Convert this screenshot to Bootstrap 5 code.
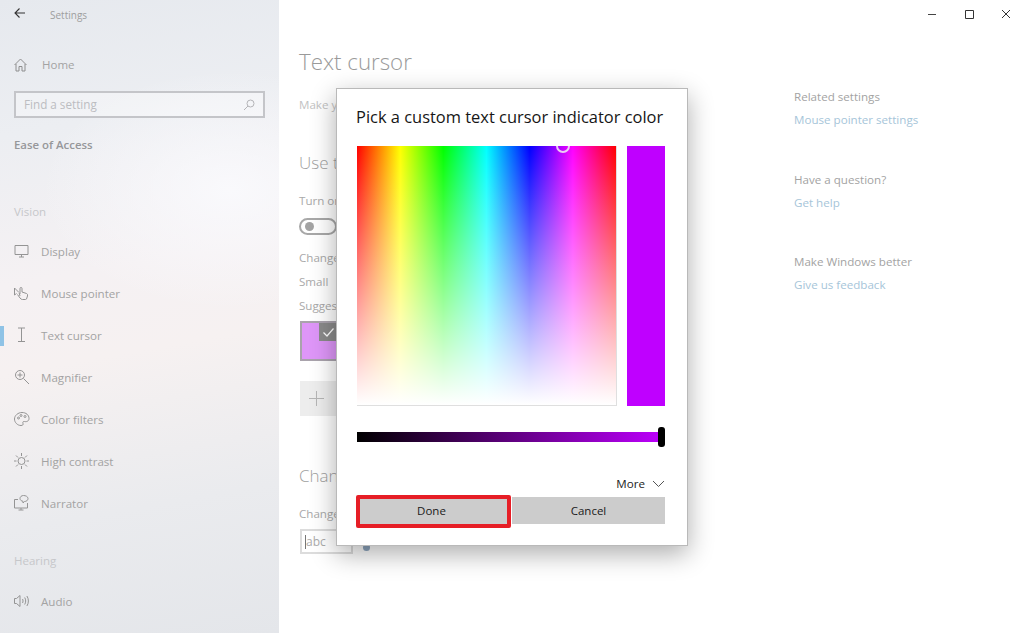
<!DOCTYPE html>
<html lang="en">
<head>
<meta charset="utf-8">
<title>Settings</title>
<link href="https://cdn.jsdelivr.net/npm/bootstrap@5.3.0/dist/css/bootstrap.min.css" rel="stylesheet">
<style>
html,body{height:100%;overflow:hidden;background:#fff}
body{font-family:"Open Sans","Noto Sans",sans-serif;font-size:12px;color:#9b9b9b;position:relative}
.shell{height:633px}
.side{width:279px;height:633px;flex:none;overflow:hidden;padding-left:14px;
 background:radial-gradient(ellipse 190px 120px at 230px 190px,rgba(250,250,253,.9),rgba(250,250,253,0)),linear-gradient(170deg,#e6e9ee 0%,#eceef2 20%,#f5f1f3 42%,#f6f1f1 55%,#eaebee 78%,#e4e6ea 100%)}
.titlebar{height:31px;color:#9e9e9e;font-size:10px}
.backic{width:12px;height:12px;margin-right:24px;margin-top:-6px;color:#333}
.homerow{height:46px;margin-top:10px;margin-bottom:4px;font-size:11.5px;color:#a3a3a3;padding-top:1px}
.homerow svg{margin-right:15px}
.findbox{width:251px;height:27px;border:2px solid #c4c5c9;padding:0 8px;font-size:11.7px;color:#bcbdc1;background:rgba(255,255,255,.3)}
.cat{font-weight:600;color:#96979a;font-size:11.4px;margin-top:18px;height:18px;line-height:18px}
.groupname{color:#c6c7ca;font-size:11.5px;height:18px;line-height:18px}
.g1{margin-top:49px;margin-bottom:10px}
.g2{margin-top:27px;margin-bottom:11px}
.navrow{height:42px;color:#a3a3a3;font-size:11.6px;position:relative}
.navrow svg{width:16px;height:16px;margin-right:11px;color:#949494;flex:none;margin-top:-3px}
.activebar{position:absolute;left:-14px;top:11px;width:4px;height:20px;background:#8fc3e6}
.mainpane{padding:0 0 0 20px;width:495px;flex:none}
.ptitle{font-size:22.3px;font-weight:300;color:#9a9a9a;line-height:32px;margin-top:46px}
.psub{font-size:11.6px;color:#c2c2c2;margin-top:19px;line-height:16px}
.sect{font-size:17px;font-weight:300;color:#9f9f9f;line-height:24px}
.lbl{font-size:11.6px;color:#a9a9a9;line-height:16px}
.secta{margin-top:38px}
.sectb{margin-top:48px}
.lbl1{margin-top:18px}
.lbl2{margin-top:15px}
.lbl3{margin-top:8px}
.tog{width:38px;height:17px;border:2px solid #a8a8a8;border-radius:9px;margin-top:9px;padding-left:4px}
.knob{width:9px;height:9px;border-radius:50%;background:#a3a3a3}
.swatchrow{width:60px;height:40px;background:#de96f8;border:2px solid #a9a3ac;margin-top:7px;position:relative;margin-left:1px}
.swcheck{position:absolute;left:17px;top:0;width:19px;height:18px;background:#8a8a8a}
.addbtn{width:60px;height:35px;background:#ededed;margin-top:20px;margin-left:1px;padding-left:9px}
.abcrow{gap:10px;margin-top:7px;margin-left:1px}
.abcbox{width:53px;height:25px;border:2px solid #dcdcdc;padding-left:3px;font-size:12px;color:#ababab;line-height:21px}
.abcbox::before{content:"";display:inline-block;width:1px;height:14px;background:#777;vertical-align:-3px}
.thickdot{width:7px;height:7px;border-radius:50%;background:#8ea6bf;margin-top:15px}
.railpane{padding-left:20px;padding-top:88px}
.railh{font-size:11.6px;color:#a3a3a3;line-height:17px}
.raill{font-size:11.6px;color:#a6c5d9;line-height:17px;margin-top:6px;margin-bottom:42.5px;text-decoration:none;display:block}
.winbtns{position:absolute;top:0;right:0;color:#2b2b2b}
.winbtn{width:37px;height:27px}
.dlg{position:absolute;left:336px;top:88px;width:352px;height:458px;background:#fff;border:1px solid #b9b9b9;box-shadow:0 8px 24px rgba(0,0,0,.32);padding:0 22px 0 20px;color:#111}
.dlgtitle{font-size:16.45px;line-height:24px;margin-top:16px;margin-left:-1px;white-space:nowrap;color:#161616}
.pickrow{margin-top:17px;gap:10px;height:260px}
.huefield{width:260px;height:260px;position:relative;overflow:hidden;border:1px solid #dfdfdf;border-top:0;border-left:0;
 background:linear-gradient(to bottom,rgba(255,255,255,0),#fff),linear-gradient(to right,#f00,#ff0 16.67%,#0f0 33.33%,#0ff 50%,#00f 66.67%,#f0f 83.33%,#f00)}
.pickring{position:absolute;left:199px;top:-7px;width:14px;height:14px;border:2px solid #eccbf5;border-radius:50%}
.previewbar{width:38px;height:260px;background:#bf00ff}
.valrow{position:relative;margin-top:26px;height:10px;width:308px;background:linear-gradient(to right,#000,#bf00ff)}
.valthumb{position:absolute;right:0;top:-5px;width:7px;height:20px;border-radius:3px;background:#000}
.moreln{margin-top:32px;height:20px;font-size:11.6px;color:#222;gap:7px;margin-bottom:3px}
.actions{gap:2px;height:27px;margin-left:1px}
.actbtn{background:#ccc;border:0;border-radius:0;padding:0;font-size:11.5px;color:#1a1a1a;height:27px;width:152px}
.actbtn.doneb{padding-right:5px}
.actbtn.cancelb{width:153px}
.redmark{position:absolute;left:-2px;top:-2px;right:-1px;bottom:-4px;border:4px solid #e61e26;border-radius:2px;pointer-events:none}
</style>
</head>
<body>
<div class="d-flex shell">
 <aside class="side">
  <div class="titlebar d-flex align-items-center">
   <svg class="backic" viewBox="0 0 12 12" fill="none" stroke="currentColor" stroke-width="1.1"><path d="M11 6H1M5.500 1.500 1 6l4.500 4.500"/></svg>
   <span>Settings</span>
  </div>
  <div class="homerow d-flex align-items-center">
   <svg width="13" height="14" viewBox="0 0 13 14" fill="none" stroke="#8e8e8e" stroke-width="1"><path d="M.5 7 6.500 1l6 6M2 6v7h3V8.500h3V13h3V6"/></svg>
   <span>Home</span>
  </div>
  <div class="findbox d-flex align-items-center justify-content-between">
   <span>Find a setting</span>
   <svg width="12" height="12" viewBox="0 0 12 12" fill="none" stroke="#b5b5b8"><circle cx="7.500" cy="4.500" r="3.500"/><path d="M5 7 1 11"/></svg>
  </div>
  <div class="cat">Ease of Access</div>
  <div class="groupname g1">Vision</div>
  <div class="navrow d-flex align-items-center"><svg viewBox="0 0 16 16" fill="none" stroke="currentColor"><path d="M1 2.500h13v9H1zM7.500 11.500v2.500M5 14h5"/></svg><span>Display</span></div>
  <div class="navrow d-flex align-items-center"><svg viewBox="0 0 16 16" fill="none" stroke="currentColor"><path d="M.5 3v7l2-1.500M.5 3l4 4M6 11 5 7.500M6 9V3.500a1 1 0 0 1 2 0V7l4.500 1.500q1.500.5 1 2.500l-1 3q-.3.5-1 .5H8.500Q7 14.500 6 13L3.500 9.500"/></svg><span>Mouse pointer</span></div>
  <div class="navrow d-flex align-items-center"><span class="activebar"></span><svg viewBox="0 0 16 16" fill="none" stroke="currentColor"><path d="M4 1h7M7.500 1v14M4 14.500h7"/></svg><span>Text cursor</span></div>
  <div class="navrow d-flex align-items-center"><svg viewBox="0 0 16 16" fill="none" stroke="currentColor"><circle cx="6" cy="6" r="4.500"/><path d="M9.500 9.500 15 15M6 3.500v5M3.500 6h5"/></svg><span>Magnifier</span></div>
  <div class="navrow d-flex align-items-center"><svg viewBox="0 0 16 16" fill="none" stroke="currentColor"><path d="M8 1.500c4 0 7 2.500 7 6 0 3-3 3.500-4.500 3-1.500-.3-2 .7-1.500 2s-.5 2-2 2c-3.500 0-6.500-3-6.500-6.500S4 1.500 8 1.500z"/><circle cx="4.500" cy="7" r="1"/><circle cx="7" cy="4.500" r="1"/><circle cx="11" cy="5.500" r="1"/></svg><span>Color filters</span></div>
  <div class="navrow d-flex align-items-center"><svg viewBox="0 0 16 16" fill="none" stroke="currentColor"><circle cx="7.500" cy="8" r="3.500"/><path d="M7.500 0v3M7.500 13v3M0 8h2.500M12.500 8H15M2 2.500l2 2M11 11.500l2 2M13 2.500l-2 2M4 11.500l-2 2"/></svg><span>High contrast</span></div>
  <div class="navrow d-flex align-items-center"><svg viewBox="0 0 16 16" fill="none" stroke="currentColor"><path d="M4 4.500H.5v8.500h13V8M7 13v2M4.500 15h5M6 3.500C6 1.800 7.500.5 9.500.5s4.500 1 4.500 3-1.800 3-3.500 3L9 8V6.300C7.300 6 6 5 6 3.500z"/></svg><span>Narrator</span></div>
  <div class="groupname g2">Hearing</div>
  <div class="navrow d-flex align-items-center"><svg viewBox="0 0 16 16" fill="none" stroke="currentColor"><path d="M.5 5.500v5h2l3.500 3v-11l-3.500 3zM8.500 6c.7 1.200.7 2.800 0 4M10.700 4.500c1.300 2.200 1.300 4.800 0 7M12.900 3c2 3 2 7 0 10"/></svg><span>Audio</span></div>
 </aside>
 <main class="mainpane">
  <div class="ptitle">Text cursor</div>
  <div class="psub">Make your</div>
  <div class="sect secta">Use text cursor indicator</div>
  <div class="lbl lbl1">Turn on text cursor indicator</div>
  <div class="tog d-flex align-items-center"><span class="knob"></span></div>
  <div class="lbl lbl2">Change the size</div>
  <div class="lbl lbl3">Small</div>
  <div class="lbl lbl3">Suggested colors</div>
  <div class="swatchrow"><span class="swcheck d-flex align-items-center justify-content-center"><svg width="11" height="9" viewBox="0 0 11 9" fill="none" stroke="#fff" stroke-width="1.200"><path d="M.5 4.500 4 8l6.500-7.500"/></svg></span></div>
  <div class="addbtn d-flex align-items-center"><svg width="15" height="15" viewBox="0 0 15 15" stroke="#b5b5b5"><path d="M7.500 0v15M0 7.500h15"/></svg></div>
  <div class="sect sectb">Change thickness</div>
  <div class="lbl lbl1">Change the thickness</div>
  <div class="abcrow d-flex"><div class="abcbox">abc</div><span class="thickdot"></span></div>
 </main>
 <aside class="railpane">
  <div class="railh">Related settings</div>
  <a class="raill" href="#">Mouse pointer settings</a>
  <div class="railh">Have a question?</div>
  <a class="raill" href="#">Get help</a>
  <div class="railh">Make Windows better</div>
  <a class="raill" href="#">Give us feedback</a>
 </aside>
</div>
<div class="winbtns d-flex">
 <div class="winbtn d-flex align-items-center justify-content-center"><svg width="10" height="10" viewBox="0 0 10 10" stroke="#444"><path d="M1 5.500h8"/></svg></div>
 <div class="winbtn d-flex align-items-center justify-content-center"><svg width="10" height="10" viewBox="0 0 10 10" fill="none" stroke="#333"><path d="M1.500 1.500h8v8h-8z"/></svg></div>
 <div class="winbtn d-flex align-items-center justify-content-center"><svg width="10" height="10" viewBox="0 0 10 10" fill="none" stroke="#333"><path d="M1 1l8 8M9 1l-8 8"/></svg></div>
</div>
<section class="dlg">
 <div class="dlgtitle">Pick a custom text cursor indicator color</div>
 <div class="pickrow d-flex">
  <div class="huefield"><span class="pickring"></span></div>
  <div class="previewbar"></div>
 </div>
 <div class="valrow"><span class="valthumb"></span></div>
 <div class="moreln d-flex align-items-center justify-content-end"><span>More</span><svg width="13" height="8" viewBox="0 0 13 8" fill="none" stroke="#555"><path d="M1 1l5.500 5.500L12 1"/></svg></div>
 <div class="actions d-flex">
  <button class="actbtn doneb position-relative" type="button">Done<span class="redmark"></span></button>
  <button class="actbtn cancelb" type="button">Cancel</button>
 </div>
</section>
<script src="https://cdn.jsdelivr.net/npm/bootstrap@5.3.0/dist/js/bootstrap.bundle.min.js"></script>
</body>
</html>
